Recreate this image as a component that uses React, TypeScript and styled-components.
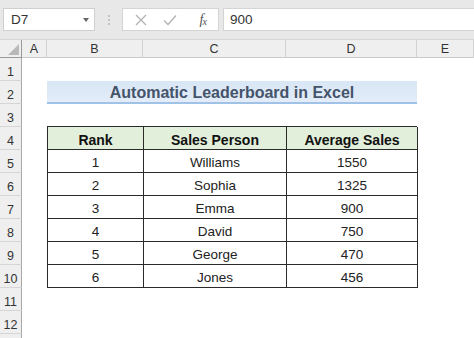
import React from "react";
import styled, { createGlobalStyle } from "styled-components";

const Global = createGlobalStyle`
  html, body { margin: 0; padding: 0; background: #ffffff; }
  body { font-family: "Liberation Sans", Arial, sans-serif; }
  * { box-sizing: border-box; }
`;

const Page = styled.div`
  width: 474px;
  height: 338px;
  overflow: hidden;
  background: #ffffff;
`;

const Toolbar = styled.div`
  height: 40px;
  background: #e8e8e8;
  display: flex;
  align-items: center;
  padding: 0 0 0 3px;
  border-bottom: 1px solid #d6d6d6;
`;

const NameBox = styled.div`
  width: 92px;
  height: 23px;
  background: #ffffff;
  border: 1px solid #cfcfcf;
  display: flex;
  align-items: center;
  justify-content: space-between;
  padding: 0 5px 0 7px;
  font-size: 13.5px;
  color: #333;
`;

const Caret = styled.span`
  width: 0;
  height: 0;
  border-left: 3.5px solid transparent;
  border-right: 3.5px solid transparent;
  border-top: 4px solid #666;
`;

const Dots = styled.div`
  width: 27px;
  display: flex;
  flex-direction: column;
  align-items: center;
  gap: 2px;
  span {
    width: 2px;
    height: 2px;
    background: #b8b8b8;
    border-radius: 1px;
  }
`;

const FxBox = styled.div`
  width: 97px;
  height: 23px;
  background: #ffffff;
  border: 1px solid #d4d4d4;
  display: flex;
  align-items: center;
  justify-content: space-around;
  padding: 0 4px;
`;

const FxText = styled.span`
  font-family: "Liberation Serif", serif;
  font-style: italic;
  font-size: 14px;
  color: #555;
  letter-spacing: -1px;
  margin-left: 6px;
  sub { font-size: 10px; vertical-align: -1px; }
`;

const FormulaInput = styled.div`
  flex: 1;
  height: 23px;
  margin-left: 4px;
  background: #ffffff;
  border: 1px solid #d4d4d4;
  border-right: none;
  display: flex;
  align-items: center;
  padding-left: 6px;
  font-size: 13.5px;
  color: #333;
`;

const Sheet = styled.div`
  display: grid;
  grid-template-columns: 22px 25px 96px 143px 131px 57px;
  grid-template-rows: 18px repeat(13, 23px);
`;

const ColHead = styled.div`
  background: #efefef;
  border-right: 1px solid #d2d2d2;
  border-bottom: 1px solid #c8c8c8;
  display: flex;
  align-items: center;
  justify-content: center;
  padding-top: 1px;
  font-size: 12.5px;
  color: #333;
`;

const Corner = styled.div`
  position: relative;
  background: #efefef;
  border-right: 1px solid #9a9a9a;
  border-bottom: 1px solid #9a9a9a;
  &::after {
    content: "";
    position: absolute;
    right: 2px;
    bottom: 2px;
    width: 0;
    height: 0;
    border-left: 11px solid transparent;
    border-bottom: 11px solid #b9b9b9;
  }
`;

const RowHead = styled.div<{ $row: number }>`
  grid-column: 1;
  grid-row: ${(p) => p.$row + 1};
  background: #efefef;
  border-right: 1px solid #a8a8a8;
  border-bottom: 1px solid #d6d6d6;
  display: flex;
  align-items: center;
  justify-content: center;
  padding-top: 5px;
  font-size: 12.5px;
  color: #333;
`;

const Title = styled.div`
  grid-column: 3 / 6;
  grid-row: 3;
  background: linear-gradient(#d9e6f5, #e3ecf8);
  border-bottom: 2px solid #9fc2e6;
  display: flex;
  align-items: center;
  justify-content: center;
  padding-top: 2px;
  font-weight: bold;
  font-size: 16px;
  color: #44546a;
`;

const Table = styled.div`
  grid-column: 3 / 6;
  grid-row: 5 / 12;
  display: grid;
  grid-template-columns: 96px 143px 131px;
  grid-template-rows: repeat(7, 23px);
  border-left: 1px solid #2a2a2a;
  border-top: 1px solid #2a2a2a;
  margin-top: -1px;
`;

const Cell = styled.div<{ $head?: boolean }>`
  border-right: 1px solid #2a2a2a;
  border-bottom: 1px solid #2a2a2a;
  background: ${(p) => (p.$head ? "#e2efda" : "#ffffff")};
  display: flex;
  align-items: center;
  justify-content: center;
  padding-top: 3px;
  font-size: ${(p) => (p.$head ? "14px" : "13.5px")};
  font-weight: ${(p) => (p.$head ? "bold" : "normal")};
  color: ${(p) => (p.$head ? "#111" : "#222")};
`;

const cols = ["A", "B", "C", "D", "E"];
const data: [string, string, string][] = [
  ["1", "Williams", "1550"],
  ["2", "Sophia", "1325"],
  ["3", "Emma", "900"],
  ["4", "David", "750"],
  ["5", "George", "470"],
  ["6", "Jones", "456"],
];

export default function App() {
  return (
    <Page>
      <Global />
      <Toolbar>
        <NameBox>
          <span>D7</span>
          <Caret />
        </NameBox>
        <Dots>
          <span />
          <span />
          <span />
        </Dots>
        <FxBox>
          <svg width="12" height="12" viewBox="0 0 12 12">
            <path d="M1 1 L11 11 M11 1 L1 11" stroke="#b3b3b3" strokeWidth="1.3" fill="none" />
          </svg>
          <svg width="14" height="12" viewBox="0 0 14 12">
            <path d="M1 6.5 L5 10.5 L13 1.5" stroke="#b3b3b3" strokeWidth="1.3" fill="none" />
          </svg>
          <FxText>
            f<sub>x</sub>
          </FxText>
        </FxBox>
        <FormulaInput>900</FormulaInput>
      </Toolbar>
      <Sheet>
        <Corner />
        {cols.map((c) => (
          <ColHead key={c}>{c}</ColHead>
        ))}
        {Array.from({ length: 13 }, (_, i) => (
          <RowHead key={i} $row={i + 1}>
            {i < 12 ? i + 1 : null}
          </RowHead>
        ))}
        <Title>Automatic Leaderboard in Excel</Title>
        <Table>
          <Cell $head>Rank</Cell>
          <Cell $head>Sales Person</Cell>
          <Cell $head>Average Sales</Cell>
          {data.map((r) =>
            r.map((v, j) => <Cell key={r[0] + j}>{v}</Cell>)
          )}
        </Table>
      </Sheet>
    </Page>
  );
}
